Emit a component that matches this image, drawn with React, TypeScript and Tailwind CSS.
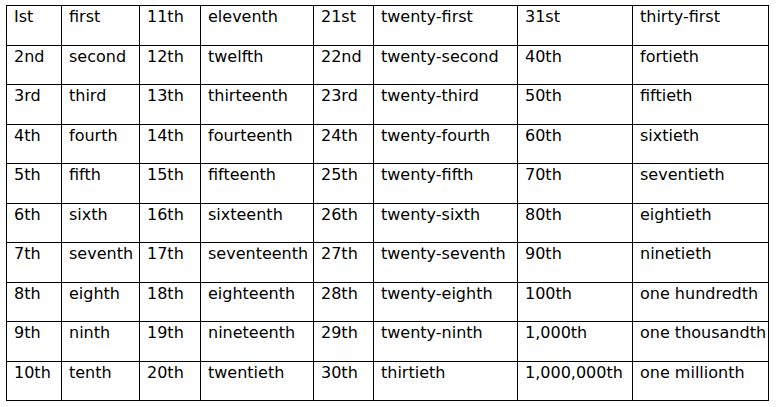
import React from "react";

const rows: string[][] = [
  ["Ist", "first", "11th", "eleventh", "21st", "twenty-first", "31st", "thirty-first"],
  ["2nd", "second", "12th", "twelfth", "22nd", "twenty-second", "40th", "fortieth"],
  ["3rd", "third", "13th", "thirteenth", "23rd", "twenty-third", "50th", "fiftieth"],
  ["4th", "fourth", "14th", "fourteenth", "24th", "twenty-fourth", "60th", "sixtieth"],
  ["5th", "fifth", "15th", "fifteenth", "25th", "twenty-fifth", "70th", "seventieth"],
  ["6th", "sixth", "16th", "sixteenth", "26th", "twenty-sixth", "80th", "eightieth"],
  ["7th", "seventh", "17th", "seventeenth", "27th", "twenty-seventh", "90th", "ninetieth"],
  ["8th", "eighth", "18th", "eighteenth", "28th", "twenty-eighth", "100th", "one hundredth"],
  ["9th", "ninth", "19th", "nineteenth", "29th", "twenty-ninth", "1,000th", "one thousandth"],
  ["10th", "tenth", "20th", "twentieth", "30th", "thirtieth", "1,000,000th", "one millionth"],
];

export default function App() {
  return (
    <div className="w-[779px] h-[407px] bg-white pt-[5px] pl-[6px]" style={{ fontFamily: '"DejaVu Sans", Verdana, sans-serif' }}>
      <div className="grid w-max grid-cols-[55px_78px_61px_113px_60px_144px_115px_136px] grid-rows-[40px_39px_40px_39px_40px_39px_40px_39px_40px_39px] border-l border-t border-black text-[16px] leading-[19px] text-black">
        {rows.flatMap((r, i) =>
          r.map((c, j) => (
            <div key={`${i}-${j}`} className="border-r border-b border-black pl-[7px] pt-[1px] whitespace-nowrap overflow-hidden">
              {c}
            </div>
          ))
        )}
      </div>
    </div>
  );
}
